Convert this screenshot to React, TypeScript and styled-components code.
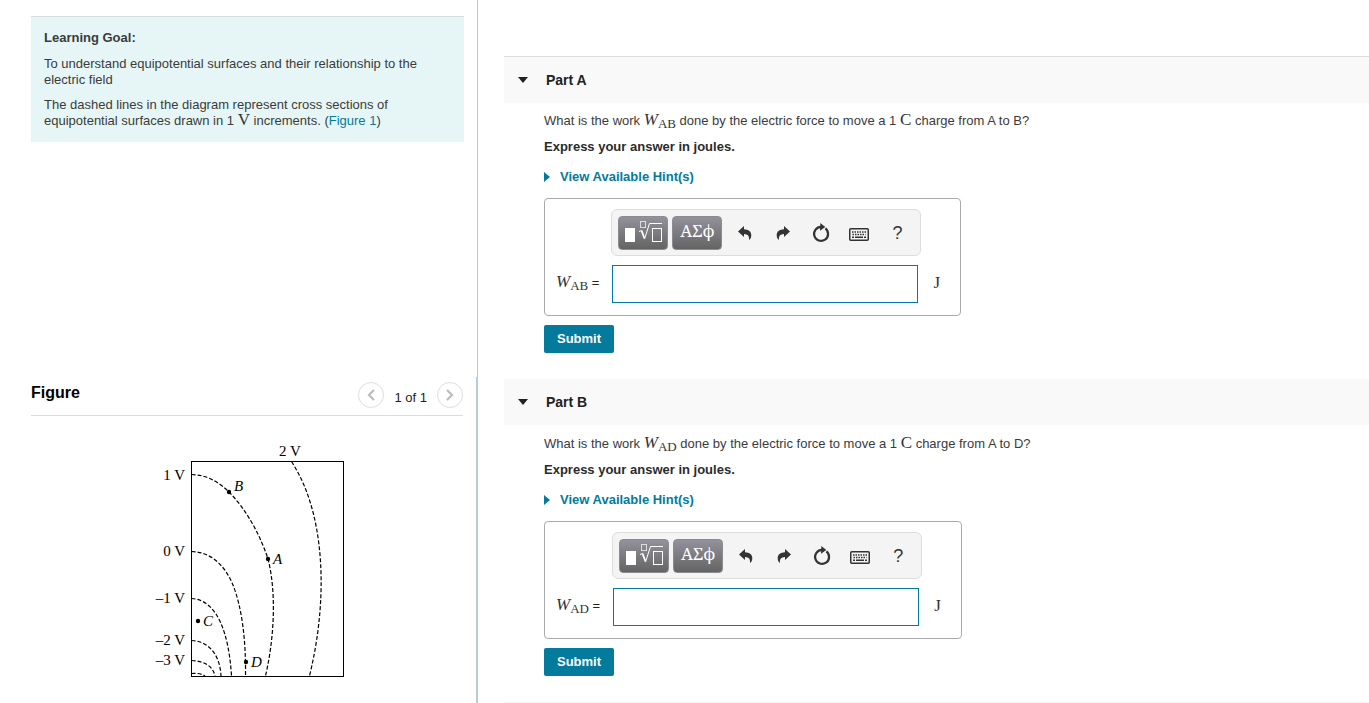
import React from "react";
import styled, { createGlobalStyle } from "styled-components";

const teal = "#047a9c";
const serif = '"Liberation Serif", "Times New Roman", serif';

const GlobalStyle = createGlobalStyle`
  * { box-sizing: border-box; }
  body {
    margin: 0;
    background: #fff;
    color: #3b3b3b;
    font: 13px/16px "Liberation Sans", Arial, sans-serif;
  }
  p, h2, h3 { margin: 0; }
  button, input { font: inherit; margin: 0; }
`;

const Page = styled.div`
  display: flex;
  min-height: 100vh;
`;

const Sidebar = styled.aside`
  flex: 0 0 478px;
  display: flex;
  flex-direction: column;
`;

const Intro = styled.div`
  min-height: 377px;
  padding: 16px 13px 0 31px;
  border-right: 1px solid #c0c6d3;
`;

const Goal = styled.section`
  display: flex;
  flex-direction: column;
  gap: 9px;
  padding: 13px;
  border-top: 1px solid #d9dede;
  background: #e6f6f6;
`;

const GoalTitle = styled.h3`
  padding-bottom: 1px;
  font-size: 13px;
  line-height: 16px;
`;

const Link = styled.a`
  color: ${teal};
  text-decoration: none;
`;

const FigurePanel = styled.section`
  flex: 1;
  padding: 0 13px 0 31px;
  border-right: 2px solid #b8cbdc;
`;

const FigureHeader = styled.header`
  display: flex;
  align-items: center;
  height: 39px;
  border-bottom: 1px solid #dcdcdc;
`;

const FigureTitle = styled.h2`
  flex: 1;
  padding-bottom: 6px;
  color: #000;
  font-size: 16px;
  line-height: 20px;
`;

const Pager = styled.nav`
  display: flex;
  align-items: center;
  gap: 10px;
  padding-bottom: 2px;
`;

const PageCount = styled.span`
  padding-top: 6px;
  color: #222;
`;

const RoundButton = styled.button`
  display: flex;
  align-items: center;
  justify-content: center;
  width: 26px;
  height: 26px;
  padding: 0;
  border: 1px solid #dedede;
  border-radius: 50%;
  background: #fff;
`;

const Diagram = styled.svg`
  display: block;
  width: 200px;
  height: 240px;
  margin: 24px auto 0 119px;
  font: 15px ${serif};
  fill: #000;
`;

const Main = styled.main`
  flex: 1;
  padding: 56px 0 0 26px;
`;

const Parts = styled.div`
  border-top: 1px solid #dcdcdc;
  border-bottom: 1px solid #f6f6f6;

  section + section form {
    padding-top: 11px;
  }
`;

const PartHeader = styled.h2`
  height: 46px;
  background: #f9f9f9;
  font-size: 14px;
`;

const Toggle = styled.button`
  display: flex;
  align-items: center;
  gap: 18px;
  width: 100%;
  height: 100%;
  padding: 0 14px;
  border: 0;
  background: none;
  color: #222;
  font-weight: bold;
`;

const PartBody = styled.form`
  display: flex;
  flex-direction: column;
  align-items: flex-start;
  padding: 10px 40px 26px;
`;

const Question = styled.p`
  white-space: nowrap;
`;

const Instruction = styled.p`
  margin-top: 10px;
  color: #2b2b2b;
  font-weight: bold;
`;

const HintButton = styled.button`
  display: flex;
  align-items: center;
  gap: 10px;
  margin: 14px 0 13px;
  padding: 0;
  border: 0;
  background: none;
  color: ${teal};
  font-weight: bold;
`;

const AnswerBox = styled.div`
  display: grid;
  grid-template-columns: auto auto auto;
  align-items: center;
  column-gap: 13px;
  row-gap: 9px;
  height: 118px;
  padding: 10px 20px 12px 11px;
  border: 1px solid #aaa;
  border-radius: 4px;
`;

const Toolbar = styled.div`
  grid-column: 2 / 4;
  display: flex;
  align-items: center;
  justify-self: start;
  width: 310px;
  height: 47px;
  margin-left: -1px;
  padding: 0 2px 0 6px;
  border: 1px solid #ddd;
  border-radius: 6px;
  background: #f4f4f4;
`;

const PaletteButton = styled.button`
  display: flex;
  flex: none;
  align-items: center;
  justify-content: center;
  width: 50px;
  height: 34px;
  margin-right: 4px;
  padding: 0 0 4px;
  border: 1px solid #8c8c90;
  border-radius: 4px;
  background: linear-gradient(#93919b, #646464);
  color: #fff;
  font: 17px/28px "Noto Serif", ${serif};
`;

const ToolButton = styled.button`
  display: flex;
  flex: none;
  align-items: center;
  justify-content: center;
  width: 38px;
  height: 34px;
  padding: 0;
  border: 0;
  background: none;
  color: #333;
  font-size: 18px;
`;

const AnswerLabel = styled.label`
  padding-bottom: 2px;
  color: #222;
  white-space: nowrap;
`;

const AnswerInput = styled.input`
  width: 306px;
  height: 38px;
  padding: 0 8px;
  border: 1px solid ${teal};
  border-radius: 0;
  background: #fff;
`;

const MathText = styled.span`
  font: 17px/0 ${serif};
  color: #333;

  sub {
    font-size: 13px;
    line-height: 0;
    vertical-align: -3px;
  }
`;

const Unit = styled(MathText)`
  padding: 0 0 3px 2px;
  line-height: 16px;
`;

const SubmitButton = styled.button`
  width: 70px;
  height: 28px;
  margin-top: 9px;
  padding: 0;
  border: 0;
  border-radius: 2px;
  background: ${teal};
  color: #fff;
  font-weight: bold;
`;

const curves = [
  "M41.5 34.5C58 35 70 43 79 52C97 70 111 97 118 119C126 150 125 195 115.5 236",
  "M141.500 21.5C156 44 163 68 167 91C173 126 174 176 159.500 236",
  "M41.5 111.500C63 112 76 128 83 145C92 168 96 200 95.500 236",
  "M41.5 158.500C68 160 79 195 81.5 236",
  "M41.5 200.500C58 201 70 214 71 236",
  "M41.5 220.500C54 221 63 226 65 236",
  "M41.5 233.500C48 233 52 234 55 236",
];

const voltages: [string, number][] = [
  ["1 V", 40],
  ["0 V", 116],
  ["–1 V", 163],
  ["–2 V", 205],
  ["–3 V", 225],
];

const points = [
  { name: "B", x: 79, y: 52, tx: 84, ty: 51 },
  { name: "A", x: 118, y: 119, tx: 123, ty: 124 },
  { name: "C", x: 48, y: 181, tx: 53, ty: 186 },
  { name: "D", x: 96, y: 222, tx: 101, ty: 227 },
];

function EquipotentialDiagram() {
  return (
    <Diagram viewBox="0 0 200 240" role="img" aria-label="Equipotential lines">
      <rect x="41.5" y="21.5" width="152" height="215" fill="none" stroke="#000" />
      {curves.map((d) => (
        <path key={d} d={d} fill="none" stroke="#000" strokeWidth="1.2" strokeDasharray="4 2" />
      ))}
      <text x="129" y="16">2 V</text>
      {voltages.map(([label, y]) => (
        <text key={label} x="35" y={y} textAnchor="end">{label}</text>
      ))}
      {points.map((p) => (
        <g key={p.name}>
          <circle cx={p.x} cy={p.y} r="2.2" />
          <text x={p.tx} y={p.ty} fontStyle="italic">{p.name}</text>
        </g>
      ))}
    </Diagram>
  );
}

const Chevron = ({ d }: { d: string }) => (
  <svg width="10" height="14" viewBox="0 0 10 14" fill="none" stroke="#bcbcbc" strokeWidth="2.2">
    <path d={d} />
  </svg>
);

const RootIcon = () => (
  <svg width="40" height="24" viewBox="0 0 40 24" fill="none" stroke="#fff">
    <rect x="2" y="9" width="10" height="14" fill="#fff" stroke="none" />
    <rect x="17.500" y="2.500" width="5" height="6" stroke="#ddd" />
    <path d="M16 12.500l2.500-1" />
    <path d="M18.500 11.500l3 8" strokeWidth="1.800" />
    <path d="M21.500 20L26.500 4.500H39" />
    <rect x="29.500" y="9.500" width="9" height="13" />
  </svg>
);

const UndoIcon = () => (
  <svg width="14" height="14" viewBox="0 0 14 14" fill="currentColor">
    <path d="M6 0v3.200C10.500 3.400 13.500 5.500 13.300 9.500 13.200 11.500 12.400 13 11 14 11.500 10 10 8 6 7.900V11L0 5.500z" />
  </svg>
);

const RedoIcon = () => (
  <svg width="14" height="14" viewBox="0 0 14 14" fill="currentColor">
    <path d="M8 0v3.200C3.500 3.400.5 5.500.7 9.500.8 11.500 1.600 13 3 14 2.500 10 4 8 8 7.900V11L14 5.500z" />
  </svg>
);

const ResetIcon = () => (
  <svg width="18" height="20" viewBox="0 0 18 20">
    <path d="M13.400 5.400A7 7 0 1 1 9 3.900" fill="none" stroke="currentColor" strokeWidth="2.200" />
    <path d="M8.300 0l5 4.100-5.300 3.700z" fill="currentColor" />
  </svg>
);

const KeyboardIcon = () => (
  <svg width="20" height="17" viewBox="0 -4 20 17" fill="none" stroke="currentColor">
    <rect x=".75" y=".75" width="18.500" height="11.500" rx="1" strokeWidth="1.500" />
    <path d="M3 4h14" strokeWidth="1.500" strokeDasharray="1.500 1" />
    <path d="M3.500 6.500h13" strokeWidth="1.500" strokeDasharray="1.500 1" />
    <path d="M3 9.300h2M6 9.300h8M15 9.300h2" strokeWidth="1.600" />
  </svg>
);

function Work({ path }: { path: string }) {
  return (
    <MathText>
      <i>W</i>
      <sub>{path}</sub>
    </MathText>
  );
}

function Part({ name, path, from, to }: { name: string; path: string; from: string; to: string }) {
  const inputId = `answer-${path}`;
  return (
    <section>
      <PartHeader>
        <Toggle type="button" aria-expanded="true">
          <svg width="10" height="6" viewBox="0 0 10 6"><path d="M0 0h10L5 6z" fill="#222" /></svg>
          {name}
        </Toggle>
      </PartHeader>
      <PartBody onSubmit={(e) => e.preventDefault()}>
        <Question>
          What is the work <Work path={path} /> done by the electric force to move a 1{" "}
          <MathText>C</MathText> charge from {from} to {to}?
        </Question>
        <Instruction>Express your answer in joules.</Instruction>
        <HintButton type="button">
          <svg width="6" height="10" viewBox="0 0 6 10"><path d="M0 0l6 5-6 5z" fill={teal} /></svg>
          View Available Hint(s)
        </HintButton>
        <AnswerBox>
          <Toolbar role="toolbar">
            <PaletteButton type="button" aria-label="Templates"><RootIcon /></PaletteButton>
            <PaletteButton type="button">ΑΣϕ</PaletteButton>
            <ToolButton type="button" aria-label="Undo"><UndoIcon /></ToolButton>
            <ToolButton type="button" aria-label="Redo"><RedoIcon /></ToolButton>
            <ToolButton type="button" aria-label="Reset"><ResetIcon /></ToolButton>
            <ToolButton type="button" aria-label="Keyboard shortcuts"><KeyboardIcon /></ToolButton>
            <ToolButton type="button">?</ToolButton>
          </Toolbar>
          <AnswerLabel htmlFor={inputId}><Work path={path} /> =</AnswerLabel>
          <AnswerInput id={inputId} type="text" />
          <Unit>J</Unit>
        </AnswerBox>
        <SubmitButton type="submit">Submit</SubmitButton>
      </PartBody>
    </section>
  );
}

export default function App() {
  return (
    <>
      <GlobalStyle />
      <Page>
        <Sidebar>
          <Intro>
            <Goal>
              <GoalTitle>Learning Goal:</GoalTitle>
              <p>To understand equipotential surfaces and their relationship to the electric field</p>
              <p>
                The dashed lines in the diagram represent cross sections of equipotential surfaces
                drawn in 1 <MathText>V</MathText> increments. (<Link href="#figure">Figure 1</Link>)
              </p>
            </Goal>
          </Intro>
          <FigurePanel id="figure">
            <FigureHeader>
              <FigureTitle>Figure</FigureTitle>
              <Pager>
                <RoundButton aria-label="Previous figure"><Chevron d="M8 2L3 7l5 5" /></RoundButton>
                <PageCount>1 of 1</PageCount>
                <RoundButton aria-label="Next figure"><Chevron d="M2 2l5 5-5 5" /></RoundButton>
              </Pager>
            </FigureHeader>
            <EquipotentialDiagram />
          </FigurePanel>
        </Sidebar>
        <Main>
          <Parts>
            <Part name="Part A" path="AB" from="A" to="B" />
            <Part name="Part B" path="AD" from="A" to="D" />
          </Parts>
        </Main>
      </Page>
    </>
  );
}
